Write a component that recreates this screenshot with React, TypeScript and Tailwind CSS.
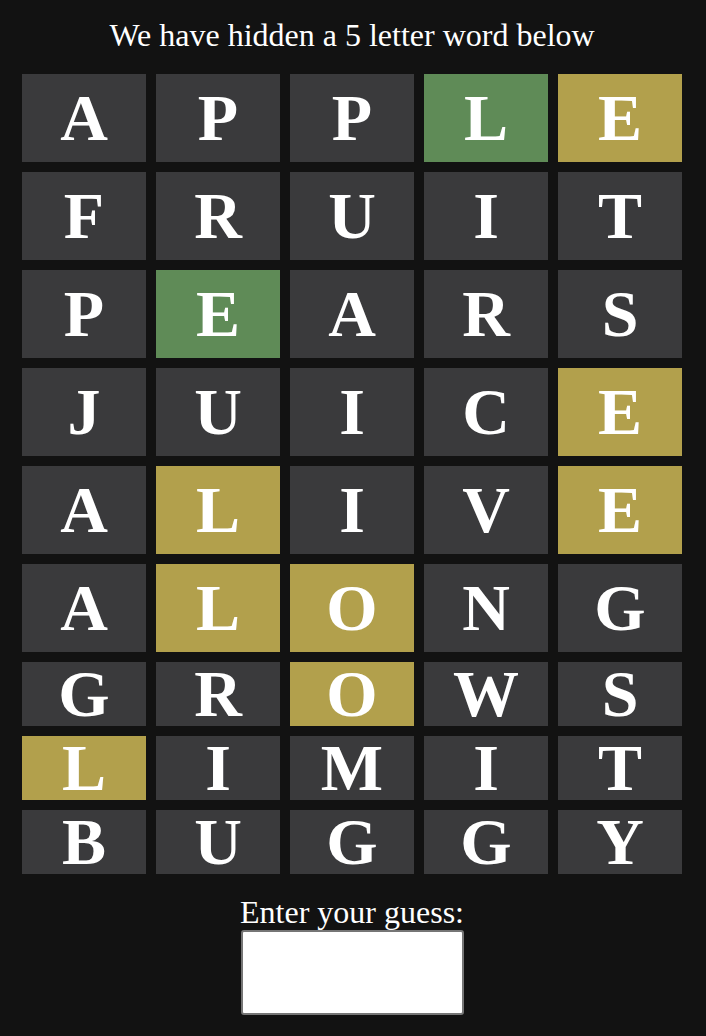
const rows: { word: string; marks: string; tall: boolean }[] = [
  { word: "APPLE", marks: "---gy", tall: true },
  { word: "FRUIT", marks: "-----", tall: true },
  { word: "PEARS", marks: "-g---", tall: true },
  { word: "JUICE", marks: "----y", tall: true },
  { word: "ALIVE", marks: "-y--y", tall: true },
  { word: "ALONG", marks: "-yy--", tall: true },
  { word: "GROWS", marks: "--y--", tall: false },
  { word: "LIMIT", marks: "y----", tall: false },
  { word: "BUGGY", marks: "-----", tall: false },
];

function tileColor(mark: string): string {
  if (mark === "g") return "bg-[#5f8b57]";
  if (mark === "y") return "bg-[#b2a04c]";
  return "bg-[#3a3a3c]";
}

export default function App() {
  return (
    <div className="min-h-[1036px] w-full bg-[#121212] font-['Liberation_Serif','Times_New_Roman',serif] text-white">
      <div className="w-[704px]">
        <h1 className="pt-[17px] text-center text-[32px] leading-[36px]">We have hidden a 5 letter word below</h1>

        <div className="mx-auto mt-[21px] flex w-[660px] flex-col gap-[10px]">
          {rows.map((row, r) => (
            <div key={r} className="grid grid-cols-5 gap-[10px]">
              {row.word.split("").map((ch, i) => (
                <div
                  key={i}
                  className={`flex items-center justify-center text-[66px] font-bold leading-none ${
                    row.tall ? "h-[88px]" : "h-[64px]"
                  } ${tileColor(row.marks[i])}`}
                >
                  {ch}
                </div>
              ))}
            </div>
          ))}
        </div>

        <div className="mt-[20px] flex flex-col items-center">
          <label htmlFor="guess" className="text-[32px] leading-[36px]">
            Enter your guess:
          </label>
          <input
            id="guess"
            type="text"
            className="h-[85px] w-[223px] rounded-[3px] border-2 border-[#767676] bg-white text-black"
          />
        </div>
      </div>
    </div>
  );
}
